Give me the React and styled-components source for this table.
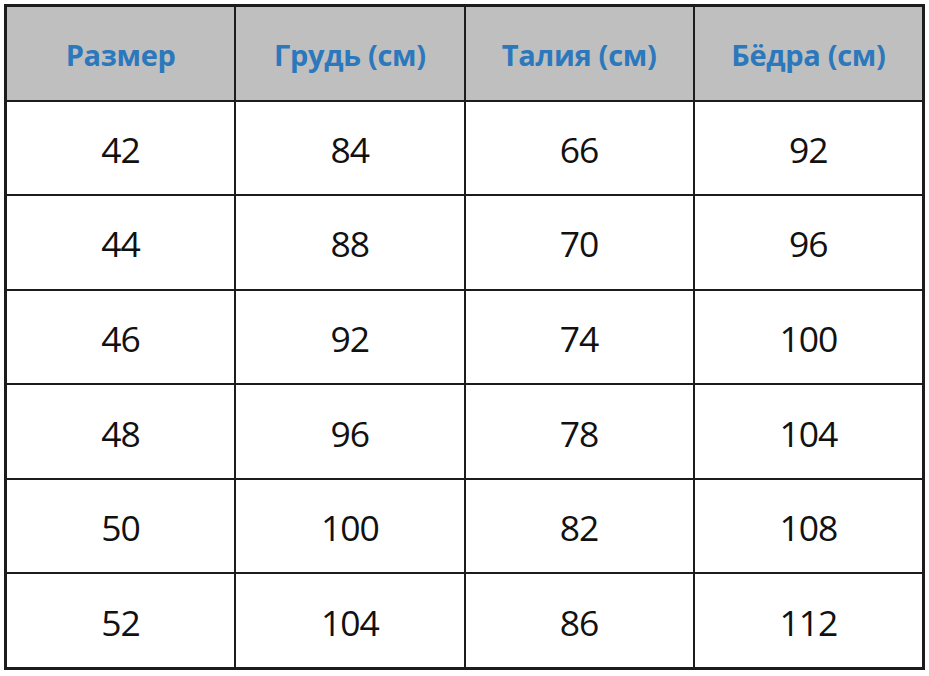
import styled, { createGlobalStyle } from "styled-components";

const Global = createGlobalStyle`
    html, body {
        margin: 0;
        padding: 0;
        background: #ffffff;
    }
    body {
        width: 929px;
        height: 676px;
        overflow: hidden;
    }
`

const Page = styled.div`
    width: 929px;
    height: 676px;
    padding: 4px 4px 6px 4px;
    box-sizing: border-box;
`

const Table = styled.div`
    width: 921px;
    height: 666px;
    box-sizing: border-box;
    display: grid;
    grid-template-columns: repeat(4, 1fr);
    grid-template-rows: repeat(7, 1fr);
    gap: 2px;
    padding: 3px;
    background-color: #1c1c1c;
`

const HeadCell = styled.div`
    background-color: #bfbfbf;
    display: flex;
    align-items: center;
    justify-content: center;
    font-family: "Open Sans", "Liberation Sans", sans-serif;
    font-weight: 700;
    font-size: 29px;
    color: #2c78bd;
    letter-spacing: -0.3px;
    padding-top: 2px;
`

const Cell = styled.div`
    background-color: #ffffff;
    display: flex;
    align-items: center;
    justify-content: center;
    font-family: "Open Sans", "Liberation Sans", sans-serif;
    font-weight: 400;
    font-size: 35.5px;
    color: #111111;
    letter-spacing: -1px;
    padding-top: 2px;
`

const headers = ["Размер", "Грудь (см)", "Талия (см)", "Бёдра (см)"];

const rows = [
    [42, 84, 66, 92],
    [44, 88, 70, 96],
    [46, 92, 74, 100],
    [48, 96, 78, 104],
    [50, 100, 82, 108],
    [52, 104, 86, 112],
];

function App() {
    return (
        <Page>
            <Global />
            <Table>
                {headers.map(h => <HeadCell key={h}>{h}</HeadCell>)}
                {rows.map((r, i) => r.map((v, j) => <Cell key={`${i}-${j}`}>{v}</Cell>))}
            </Table>
        </Page>
    )
}
export default App;
